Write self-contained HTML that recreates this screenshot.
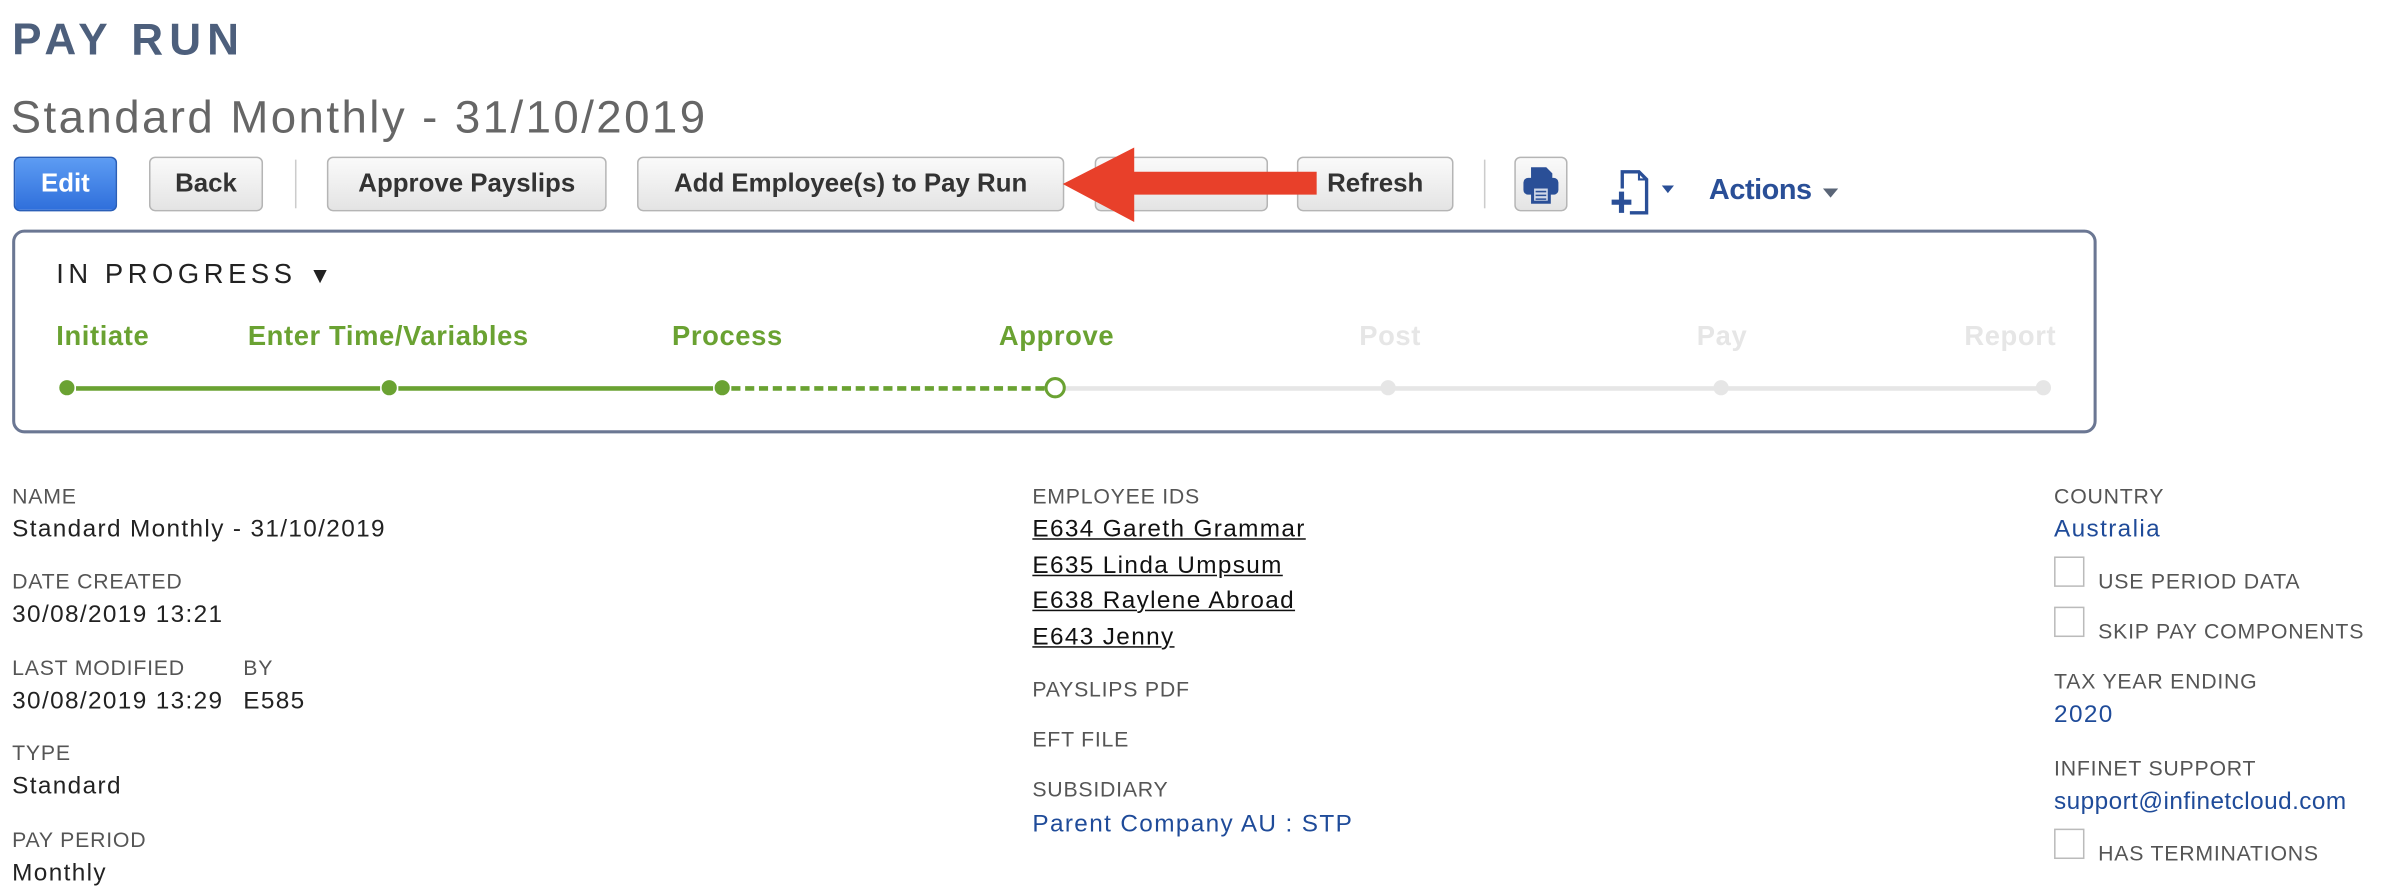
<!DOCTYPE html>
<html><head><meta charset="utf-8"><style>
html,body{margin:0;padding:0;background:#fff;overflow:hidden;width:2384px;height:866px}
#w{position:absolute;left:0;top:0;width:1568px;height:570px;transform:scale(1.5204);transform-origin:0 0;font-family:"Liberation Sans",sans-serif}
.a{position:absolute;white-space:nowrap}
.btn{position:absolute;top:103px;height:34px;border:1px solid #b5b5b5;border-radius:4px;background:linear-gradient(#fafafa,#e4e4e4);font-size:17px;font-weight:bold;color:#333;text-align:center;line-height:34px;box-sizing:content-box}
.sep{position:absolute;top:105px;width:1px;height:32px;background:#ccc}
.lbl{position:absolute;font-size:14px;color:#555;white-space:nowrap;letter-spacing:.5px}
.val{position:absolute;font-size:16px;color:#222;white-space:nowrap;letter-spacing:.9px}
.lnk{color:#1f4b99}
.u{text-decoration:underline;color:#111}
.st{position:absolute;top:211px;font-size:18px;font-weight:bold;color:#6aa232;white-space:nowrap;letter-spacing:.4px}
.gr{color:#e6e6e6}
.dot{position:absolute;top:250px;width:10px;height:10px;border-radius:50%;background:#6aa232}
.gd{background:#e6e6e6}
.cb{position:absolute;width:18px;height:18px;border:1px solid #bbb;background:#fff}
</style></head><body><div id="w">
<div class="a" style="left:8px;top:11px;font-size:29px;font-weight:bold;letter-spacing:4px;color:#4d5f7c">PAY RUN</div>
<div class="a" style="left:7px;top:61px;font-size:30px;color:#666;letter-spacing:1.6px">Standard Monthly - 31/10/2019</div>

<div class="btn" style="left:9px;width:66px;background:linear-gradient(#5d9cf3,#2f6fdb);border-color:#2a5fb8;color:#fff">Edit</div>
<div class="btn" style="left:98px;width:73px">Back</div>
<div class="sep" style="left:194px"></div>
<div class="btn" style="left:215px;width:182px">Approve Payslips</div>
<div class="btn" style="left:419px;width:279px">Add Employee(s) to Pay Run</div>
<div class="btn" style="left:720px;width:112px">Rollback</div>
<div class="btn" style="left:853px;width:101px">Refresh</div>
<div class="sep" style="left:976px"></div>
<div class="btn" style="left:996px;width:33px;padding:0">
<svg width="33" height="34" viewBox="0 0 33 34" style="position:absolute;left:0;top:0"><path d="M10 6h10l4 4v5H10z" fill="#2a4f97"/><rect x="5" y="13" width="23" height="11" rx="3" fill="#2a4f97"/><rect x="10" y="19" width="13" height="11" fill="#2a4f97"/><rect x="12" y="20" width="9" height="8" fill="#d0d8e8"/><path d="M13 22h7M13 24.5h7M13 27h7" stroke="#2a4f97" stroke-width="1"/></svg></div>
<svg class="a" style="left:1059px;top:110px" width="48" height="32" viewBox="0 0 48 32"><path d="M8 14V3h11l5 5v22H13" fill="none" stroke="#2a4f97" stroke-width="2.2"/><path d="M19 3v5h5" fill="none" stroke="#2a4f97" stroke-width="1.4"/><path d="M1 23h13M7.5 16v14" stroke="#2a4f97" stroke-width="3.4"/><path d="M34 12h8l-4 5z" fill="#2a4f97"/></svg>
<div class="a" style="left:1124px;top:115px;font-size:19px;color:#2a4f97;font-weight:bold;letter-spacing:-.3px">Actions</div>
<svg class="a" style="left:1199px;top:124px" width="12" height="8"><path d="M0 0h10l-5 6z" fill="#5a6577"/></svg>

<svg class="a" style="left:698px;top:96px" width="170" height="52"><path d="M1 25L48 1V17H168V32H48V50Z" fill="#e8402a"/></svg>

<div class="a" style="left:8px;top:151px;width:1367px;height:130px;border:2.5px solid #6b7793;border-radius:8px"></div>
<div class="a" style="left:37px;top:170px;font-size:18px;letter-spacing:3px;color:#222">IN PROGRESS <span style="font-size:15px">▼</span></div>
<div class="st" style="left:37px">Initiate</div>
<div class="st" style="left:163px">Enter Time/Variables</div>
<div class="st" style="left:442px">Process</div>
<div class="st" style="left:657px">Approve</div>
<div class="st gr" style="left:894px">Post</div>
<div class="st gr" style="left:1116px">Pay</div>
<div class="st gr" style="left:1292px">Report</div>
<div class="a" style="left:50px;top:254px;width:200px;height:3px;background:#6aa232"></div>
<div class="a" style="left:262px;top:254px;width:207px;height:3px;background:#6aa232"></div>
<div class="a" style="left:481px;top:254px;width:206px;height:0;border-top:3px dashed #6aa232"></div>
<div class="a" style="left:700px;top:254px;width:640px;height:3px;background:#e6e6e6"></div>
<div class="dot" style="left:39px"></div>
<div class="dot" style="left:251px"></div>
<div class="dot" style="left:470px"></div>
<div class="a" style="left:687px;top:248px;width:10px;height:10px;border:2px solid #6aa232;border-radius:50%;background:#fff"></div>
<div class="dot gd" style="left:908px"></div>
<div class="dot gd" style="left:1127px"></div>
<div class="dot gd" style="left:1339px"></div>

<div class="lbl" style="left:8px;top:318px">NAME</div>
<div class="val" style="left:8px;top:340px">Standard Monthly - 31/10/2019</div>
<div class="lbl" style="left:8px;top:374px">DATE CREATED</div>
<div class="val" style="left:8px;top:396px">30/08/2019 13:21</div>
<div class="lbl" style="left:8px;top:431px">LAST MODIFIED</div>
<div class="lbl" style="left:160px;top:431px">BY</div>
<div class="val" style="left:8px;top:453px">30/08/2019 13:29</div>
<div class="val" style="left:160px;top:453px">E585</div>
<div class="lbl" style="left:8px;top:487px">TYPE</div>
<div class="val" style="left:8px;top:509px">Standard</div>
<div class="lbl" style="left:8px;top:544px">PAY PERIOD</div>
<div class="val" style="left:8px;top:566px">Monthly</div>

<div class="lbl" style="left:679px;top:318px">EMPLOYEE IDS</div>
<div class="val u" style="left:679px;top:340px">E634 Gareth Grammar</div>
<div class="val u" style="left:679px;top:364px">E635 Linda Umpsum</div>
<div class="val u" style="left:679px;top:387px">E638 Raylene Abroad</div>
<div class="val u" style="left:679px;top:411px">E643 Jenny</div>
<div class="lbl" style="left:679px;top:445px">PAYSLIPS PDF</div>
<div class="lbl" style="left:679px;top:478px">EFT FILE</div>
<div class="lbl" style="left:679px;top:511px">SUBSIDIARY</div>
<div class="val lnk" style="left:679px;top:534px">Parent Company AU : STP</div>

<div class="lbl" style="left:1351px;top:318px">COUNTRY</div>
<div class="val lnk" style="left:1351px;top:340px">Australia</div>
<div class="cb" style="left:1351px;top:366px"></div>
<div class="lbl" style="left:1380px;top:374px">USE PERIOD DATA</div>
<div class="cb" style="left:1351px;top:399px"></div>
<div class="lbl" style="left:1380px;top:407px">SKIP PAY COMPONENTS</div>
<div class="lbl" style="left:1351px;top:440px">TAX YEAR ENDING</div>
<div class="val lnk" style="left:1351px;top:462px">2020</div>
<div class="lbl" style="left:1351px;top:497px">INFINET SUPPORT</div>
<div class="val lnk" style="left:1351px;top:519px;letter-spacing:.3px">support@infinetcloud.com</div>
<div class="cb" style="left:1351px;top:545px"></div>
<div class="lbl" style="left:1380px;top:553px">HAS TERMINATIONS</div>
</div></body></html>
